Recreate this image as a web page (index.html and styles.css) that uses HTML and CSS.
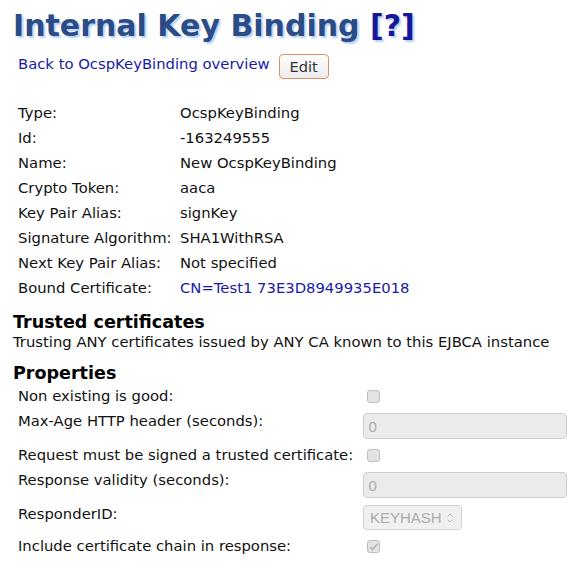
FILE: index.html
```html
<!DOCTYPE html>
<html>
<head>
<meta charset="utf-8">
<title>Internal Key Binding</title>
<link rel="stylesheet" href="styles.css">
</head>
<body>
<h1 class="title">Internal Key Binding <a class="help" href="#">[?]</a></h1>
<div class="backrow">
  <a class="link" href="#">Back to OcspKeyBinding overview</a>
  <button class="btn" type="button">Edit</button>
</div>
<div class="info">
  <div class="lbl">Type:</div><div class="val">OcspKeyBinding</div>
  <div class="lbl">Id:</div><div class="val">-163249555</div>
  <div class="lbl">Name:</div><div class="val">New OcspKeyBinding</div>
  <div class="lbl">Crypto Token:</div><div class="val">aaca</div>
  <div class="lbl">Key Pair Alias:</div><div class="val">signKey</div>
  <div class="lbl">Signature Algorithm:</div><div class="val">SHA1WithRSA</div>
  <div class="lbl">Next Key Pair Alias:</div><div class="val">Not specified</div>
  <div class="lbl">Bound Certificate:</div><div class="val"><a class="link" href="#">CN=Test1 73E3D8949935E018</a></div>
</div>
<h3 class="section">Trusted certificates</h3>
<p class="note">Trusting ANY certificates issued by ANY CA known to this EJBCA instance</p>
<h3 class="section props-title">Properties</h3>
<div class="props">
  <div class="prow">
    <div class="plbl">Non existing is good:</div>
    <div class="pctl"><span class="cb"></span></div>
  </div>
  <div class="prow">
    <div class="plbl">Max-Age HTTP header (seconds):</div>
    <div class="pctl"><input class="txt" type="text" value="0" disabled></div>
  </div>
  <div class="prow">
    <div class="plbl">Request must be signed a trusted certificate:</div>
    <div class="pctl"><span class="cb"></span></div>
  </div>
  <div class="prow">
    <div class="plbl">Response validity (seconds):</div>
    <div class="pctl"><input class="txt" type="text" value="0" disabled></div>
  </div>
  <div class="prow">
    <div class="plbl">ResponderID:</div>
    <div class="pctl">
      <span class="sel">KEYHASH
        <svg class="sel-arrows" width="8" height="12" viewBox="0 0 8 12"><path d="M1.5 4.5 L4 2 L6.5 4.5" fill="none" stroke="#b8b8b8" stroke-width="1"/><path d="M1.5 7.5 L4 10 L6.5 7.5" fill="none" stroke="#b8b8b8" stroke-width="1"/></svg>
      </span>
    </div>
  </div>
  <div class="prow">
    <div class="plbl">Include certificate chain in response:</div>
    <div class="pctl"><span class="cb"><svg width="12" height="12" viewBox="0 0 12 12"><path d="M2.5 6.2 L5 8.8 L10.5 2.5" fill="none" stroke="#b5b5b5" stroke-width="1.8"/></svg></span></div>
  </div>
</div>
</body>
</html>
```
FILE: styles.css
```css
html, body {
  margin: 0;
  padding: 0;
  background: #ffffff;
}
body {
  font-family: "DejaVu Sans", Verdana, sans-serif;
  font-size: 14.8px;
  color: #111111;
  padding: 0 12px;
}
.title {
  font-size: 30px;
  font-weight: bold;
  color: #2b4c86;
  text-shadow: 2px 2px 2px #b5d0ee;
  margin: 6px 0 0 1px;
  line-height: 40px;
}
.help {
  color: #16169a;
  text-decoration: none;
}
.link {
  color: #1a1aa6;
  text-decoration: none;
}
.backrow {
  display: flex;
  align-items: flex-start;
  gap: 9px;
  margin: 8px 0 0 6px;
}
.backrow .link {
  line-height: 20px;
}
.btn {
  font-family: "DejaVu Sans", Verdana, sans-serif;
  font-size: 14.667px;
  color: #333333;
  background: linear-gradient(#ffffff, #ececec);
  border: 1px solid #e28f66;
  border-radius: 4px;
  height: 25px;
  width: 50px;
  padding: 0;
  margin: 0;
}
.info {
  display: grid;
  grid-template-columns: 162px auto;
  margin: 21px 0 0 6px;
  line-height: 25px;
}
.section {
  font-size: 17.55px;
  font-weight: bold;
  margin: 12px 0 0 1px;
  line-height: 20px;
  color: #000;
}
.note {
  margin: 0 0 0 1px;
  line-height: 20px;
}
.props-title {
  margin-top: 11px;
}
.props {
  margin: 2px 0 0 6px;
  display: flex;
  flex-direction: column;
  gap: 3px;
}
.prow {
  display: grid;
  grid-template-columns: 345px auto;
  align-items: start;
  padding: 2px 0;
}
.plbl {
  line-height: 18px;
}
.pctl {
  display: flex;
}
.cb {
  display: inline-flex;
  box-sizing: border-box;
  width: 13px;
  height: 13px;
  border: 1px solid #bdbdbd;
  border-radius: 3px;
  background: #e3e3e3;
  margin: 3px 0 0 4px;
  align-items: center;
  justify-content: center;
}
.cb svg {
  display: block;
}
.txt {
  box-sizing: border-box;
  width: 204px;
  height: 26px;
  margin-top: 1px;
  border: 1px solid #cfcfcf;
  border-radius: 4px;
  background: #ebebeb;
  color: #b0b0b0;
  font-family: "DejaVu Sans", Verdana, sans-serif;
  font-size: 14.667px;
  padding: 0 4px;
}
.sel {
  position: relative;
  box-sizing: border-box;
  display: inline-flex;
  align-items: center;
  width: 99px;
  height: 25px;
  border: 1px solid #d2d2d2;
  border-radius: 4px;
  background: #f0f0f0;
  color: #acacac;
  font-family: "Liberation Sans", Arial, sans-serif;
  font-size: 15px;
  padding-left: 6px;
}
.sel-arrows {
  position: absolute;
  right: 7px;
  top: 6px;
}
```
